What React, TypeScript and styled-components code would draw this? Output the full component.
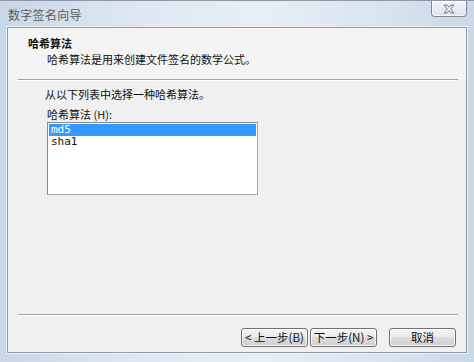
import styled, { createGlobalStyle } from "styled-components";

const font = `"Noto Sans CJK SC", "Liberation Sans", sans-serif`;

const Global = createGlobalStyle`
  html, body { margin: 0; padding: 0; background: #cfdbe7; }
  #root { width: 474px; height: 362px; }
`;

const Frame = styled.div`
  width: 474px;
  height: 362px;
  box-sizing: border-box;
  display: flex;
  flex-direction: column;
  background: linear-gradient(to right, #c8d7e6 0%, #dfe8f1 30%, #e8eef5 55%, #d9e4ef 80%, #c9d8e7 100%);
  font-family: ${font};
  border-top: 1px solid #8a98a8;
`;

const TitleBar = styled.div`
  height: 26px;
  display: flex;
  align-items: flex-start;
  justify-content: space-between;
`;

const Caption = styled.span`
  font-size: 12px;
  color: #5b5b5b;
  margin: 5px 0 0 8px;
  letter-spacing: 0.3px;
`;

const CloseButton = styled.div`
  width: 36px;
  height: 16px;
  margin-right: 7px;
  box-sizing: border-box;
  border: 1px solid #7f8a96;
  border-top: none;
  border-radius: 0 0 4px 4px;
  background: linear-gradient(#f1f4f8, #dde4ec);
  box-shadow: inset 0 0 0 1px rgba(255, 255, 255, 0.7);
  display: flex;
  align-items: center;
  justify-content: center;
`;

const Client = styled.div`
  flex: 1;
  margin: 0 7px 9px 7px;
  border: 1px solid #8e9aa8;
  box-shadow: 0 0 0 1px #eef3f8;
  background: #f0f0f0;
  display: flex;
  flex-direction: column;
`;

const Header = styled.div`
  background: #f4f4f4;
  padding: 7px 0 0 20px;
  height: 44px;
  font-size: 11px;
  color: #111;
`;

const HeaderTitle = styled.div`
  font-weight: bold;
  line-height: 16px;
`;

const HeaderText = styled.div`
  margin-left: 19px;
  line-height: 16px;
`;

const Rule = styled.div`
  height: 0;
  border-top: 1px solid #a0a0a0;
  border-bottom: 1px solid #ffffff;
  margin: 0 8px 0 10px;
`;

const Body = styled.div`
  flex: 1;
  padding: 6px 0 0 37px;
  font-size: 11px;
  color: #111;
`;

const Line = styled.div<{ indent?: number; gap?: number }>`
  line-height: 14px;
  margin-left: ${({ indent }) => indent ?? 0}px;
  margin-bottom: ${({ gap }) => gap ?? 6}px;
`;

const ListBox = styled.div`
  width: 211px;
  height: 73px;
  box-sizing: border-box;
  margin-left: 2px;
  border: 1px solid #8c8c8c;
  border-right-color: #a8a8a8;
  border-bottom-color: #a8a8a8;
  background: #fff;
  padding: 1px;
`;

const Item = styled.div<{ selected?: boolean }>`
  height: 12px;
  line-height: 12px;
  padding-left: 2px;
  font-family: "DejaVu Sans Mono", "Liberation Mono", monospace;
  font-size: 11px;
  color: ${({ selected }) => (selected ? "#ffffff" : "#111")};
  background: ${({ selected }) => (selected ? "#3399ff" : "transparent")};
`;

const Footer = styled.div`
  display: flex;
  justify-content: flex-end;
  gap: 2px;
  padding: 12px 10px 5px 0;
`;

const Button = styled.button<{ spaced?: boolean }>`
  width: 67px;
  height: 19px;
  padding: 0;
  margin-left: ${({ spaced }) => (spaced ? "10px" : "0")};
  border: 1px solid #707070;
  border-radius: 3px;
  background: linear-gradient(#f2f2f2 0%, #ebebeb 45%, #dddddd 50%, #cfcfcf 100%);
  box-shadow: inset 0 0 0 1px rgba(255, 255, 255, 0.8);
  font-family: ${font};
  font-size: 11.5px;
  color: #111;
  line-height: 15px;
  white-space: nowrap;
`;

function CloseGlyph() {
  return (
    <svg width="12" height="10" viewBox="0 0 12 10">
      <path
        d="M1 1 L4 1 L6 3.2 L8 1 L11 1 L7.6 5 L11 9 L8 9 L6 6.8 L4 9 L1 9 L4.4 5 Z"
        fill="#f4f6f8"
        stroke="#6b7580"
        strokeWidth="1"
        strokeLinejoin="round"
      />
    </svg>
  );
}

export default function App() {
  return (
    <>
      <Global />
      <Frame>
        <TitleBar>
          <Caption>数字签名向导</Caption>
          <CloseButton>
            <CloseGlyph />
          </CloseButton>
        </TitleBar>
        <Client>
          <Header>
            <HeaderTitle>哈希算法</HeaderTitle>
            <HeaderText>哈希算法是用来创建文件签名的数学公式。</HeaderText>
          </Header>
          <Rule />
          <Body>
            <Line>从以下列表中选择一种哈希算法。</Line>
            <Line indent={2} gap={1}>哈希算法 (H):</Line>
            <ListBox>
              <Item selected>md5</Item>
              <Item>sha1</Item>
            </ListBox>
          </Body>
          <Rule />
          <Footer>
            <Button>&lt; 上一步(B)</Button>
            <Button>下一步(N) &gt;</Button>
            <Button spaced>取消</Button>
          </Footer>
        </Client>
      </Frame>
    </>
  );
}
